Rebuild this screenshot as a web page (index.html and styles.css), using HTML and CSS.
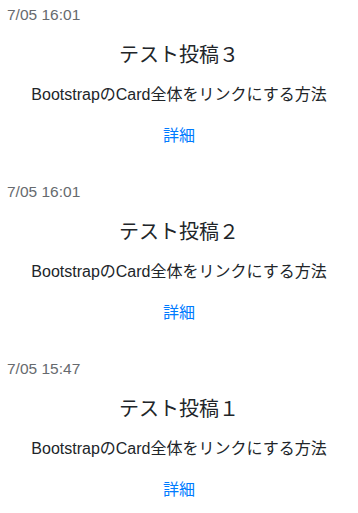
FILE: index.html
```html
<!DOCTYPE html>
<html lang="ja">
<head>
<meta charset="utf-8">
<link rel="stylesheet" href="styles.css">
</head>
<body>
<div class="list">
  <div class="post">
    <div class="date">7/05 16:01</div>
    <div class="body">
      <h5 class="title">テスト投稿３</h5>
      <p class="text">BootstrapのCard全体をリンクにする方法</p>
      <a class="more" href="#">詳細</a>
    </div>
  </div>
  <div class="post">
    <div class="date">7/05 16:01</div>
    <div class="body">
      <h5 class="title">テスト投稿２</h5>
      <p class="text">BootstrapのCard全体をリンクにする方法</p>
      <a class="more" href="#">詳細</a>
    </div>
  </div>
  <div class="post">
    <div class="date">7/05 15:47</div>
    <div class="body">
      <h5 class="title">テスト投稿１</h5>
      <p class="text">BootstrapのCard全体をリンクにする方法</p>
      <a class="more" href="#">詳細</a>
    </div>
  </div>
</div>
</body>
</html>
```

FILE: styles.css
```css
html, body {
  margin: 0;
  padding: 0;
  background: #fff;
}
body {
  font-family: "Liberation Sans", "Noto Sans CJK JP", sans-serif;
  color: #212529;
}
.list {
  display: flex;
  flex-direction: column;
  padding: 4px 0 0 7px;
}
.post {
  display: flex;
  flex-direction: column;
  height: 177px;
}
.date {
  font-size: 15.5px;
  line-height: 22px;
  color: #666a6e;
}
.body {
  display: flex;
  flex-direction: column;
  align-items: center;
  padding-top: 17px;
  margin-left: -7px;
}
.title {
  margin: 0 0 16px;
  font-size: 20px;
  font-weight: 400;
  line-height: 24px;
}
.text {
  margin: 0 0 17px;
  font-size: 16px;
  line-height: 24px;
}
.more {
  font-size: 16px;
  line-height: 24px;
  color: #007bff;
  text-decoration: none;
}
```
